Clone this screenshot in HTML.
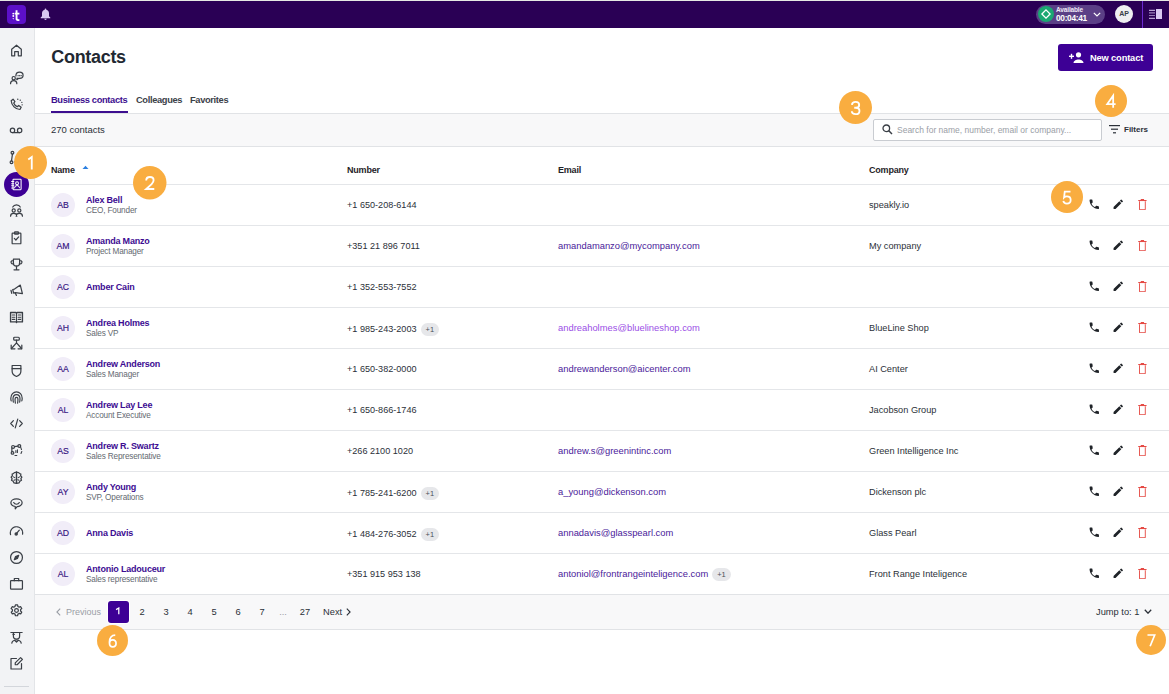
<!DOCTYPE html>
<html><head><meta charset="utf-8">
<style>
*{box-sizing:border-box;margin:0;padding:0}
html,body{width:1169px;height:694px;overflow:hidden;background:#fff;font-family:"Liberation Sans",sans-serif;color:#1f2328}
.abs{position:absolute}
#topbar{position:absolute;left:0;top:1px;width:1169px;height:27px;background:#2a0055}
#topline{position:absolute;left:0;top:0;width:1169px;height:1px;background:#e6e9e4}
#logo{position:absolute;left:7px;top:5px;width:19px;height:19px;border-radius:4px;background:#5c10c9;color:#fff;font-weight:bold;font-size:14px;line-height:19px;text-align:center}
#side{position:absolute;left:0;top:28px;width:35px;height:666px;background:#f2f3f5;border-right:1px solid #e3e5e8}
#main{position:absolute;left:35px;top:28px;width:1134px;height:666px;background:#fff}
h1{position:absolute;left:51.3px;top:47px;font-size:18px;font-weight:bold;color:#222831;letter-spacing:-0.32px}
.tab{position:absolute;top:95px;font-size:9.3px;font-weight:bold;color:#3c4149;letter-spacing:-0.34px}
#tabline{position:absolute;left:35px;top:113px;width:1134px;height:1px;background:#e1e3e6}
#band{position:absolute;left:35px;top:114px;width:1134px;height:33px;background:#f8f8f9;border-bottom:1px solid #e1e3e6}
.hdr{position:absolute;top:165px;font-size:9px;font-weight:bold;color:#1f2328;letter-spacing:-0.2px}
.row{position:absolute;left:35px;width:1134px;height:41px;border-top:1px solid #e4e6e9}
.row > div{position:absolute}
.av{left:16px;top:8px;width:24px;height:24px;border-radius:50%;background:#f1edf8;color:#34127f;font-size:8.7px;-webkit-text-stroke:0.15px #34127f;line-height:24px;text-align:center}
.nm{left:51px;font-size:9px;font-weight:bold;color:#3d0c92;white-space:nowrap;letter-spacing:-0.2px}
.sub{left:51px;top:21px;font-size:8.2px;color:#646971;white-space:nowrap;letter-spacing:-0.16px}
.num{left:312px;top:14.6px;font-size:9.1px;color:#2b3038;white-space:nowrap}
.em{left:523px;top:14px;font-size:9.4px;color:#4a1a9a;white-space:nowrap}
.em.light{color:#9b4fe6}
.co{left:834px;top:14.9px;font-size:9.2px;color:#2b3038;white-space:nowrap}
.plus{display:inline-block;margin-left:4px;height:13px;padding:0 5px;border-radius:6.5px;background:#e6e7ea;font-size:7.5px;line-height:13px;color:#4a4f57;vertical-align:0px}
.ic{position:absolute;top:14px}
#pag{position:absolute;left:35px;top:594px;width:1134px;height:36px;background:#f8f8f9;border-top:1px solid #e1e3e6;border-bottom:1px solid #e1e3e6}
.pg{position:absolute;top:607px;font-size:9.3px;color:#2b3038;text-align:center;width:20px}
.badge{position:absolute;width:32px;height:32px;border-radius:50%;background:#f9ad3f;color:#fff;font-size:18px;line-height:36px;text-align:center}
</style></head><body>
<div id="topline"></div>
<div id="topbar"></div>
<div id="logo"></div><svg class="abs" style="left:7px;top:5px" width="19" height="19" viewBox="0 0 19 19"><g fill="#fff"><circle cx="6.3" cy="8.6" r="0.95"/><circle cx="6.3" cy="11" r="0.95"/><path d="M5.4 13.2h1.8l-.9 1.3z"/><path d="M8.6 5.2h1.9v2.6h1.9v1.7h-1.9v4.1c0 .5.3.7.8.7h1.1v1.6h-1.6c-1.4 0-2.2-.7-2.2-2.1V9.5H7.7V7.8h.9z"/></g></svg>
<div id="side"></div>
<div id="main"></div>
<h1>Contacts</h1>
<div class="tab" style="left:51px;color:#3d0f8f">Business contacts</div>
<div class="abs" style="left:51px;top:111px;width:77px;height:2px;background:#3d0f8f"></div>
<div class="tab" style="left:136px">Colleagues</div>
<div class="tab" style="left:190px">Favorites</div>
<div id="tabline"></div>
<div id="band"></div>
<div class="abs" style="left:51px;top:123.8px;font-size:9.5px;color:#2b3038">270 contacts</div>
<div class="hdr" style="left:51px">Name</div>
<div class="hdr" style="left:347px">Number</div>
<div class="hdr" style="left:558px">Email</div>
<div class="hdr" style="left:869px">Company</div>
<div id="pag"></div>
<div class="row" style="top:184px"><div class="av">AB</div><div class="nm" style="top:10px">Alex Bell</div><div class="sub">CEO, Founder</div><div class="num">+1 650-208-6144</div><div class="co">speakly.io</div><svg class="ic" style="left:1053px;top:12.5px" width="12.5" height="12.5" viewBox="0 0 24 24"><path fill="#1f2328" d="M6.6 10.8c1.4 2.8 3.8 5.1 6.6 6.6l2.2-2.2c.3-.3.7-.4 1-.2 1.1.4 2.3.6 3.6.6.6 0 1 .4 1 1V20c0 .6-.4 1-1 1C10.6 21 3 13.4 3 4c0-.6.4-1 1-1h3.5c.6 0 1 .4 1 1 0 1.3.2 2.5.6 3.6.1.3 0 .7-.2 1L6.6 10.8z"/></svg><svg class="ic" style="left:1077px;top:12.5px" width="12.5" height="12.5" viewBox="0 0 24 24"><path fill="#1f2328" d="M3 17.25V21h3.75L17.81 9.94l-3.75-3.75L3 17.25zM20.71 7.04a1 1 0 0 0 0-1.41l-2.34-2.34a1 1 0 0 0-1.41 0l-1.83 1.83 3.75 3.75 1.83-1.83z"/></svg><svg class="ic" style="left:1103px;top:13.6px" width="8.8" height="11.4" viewBox="0 0 11 12" preserveAspectRatio="none"><g fill="none" stroke="#e54b45" stroke-width="1.15"><path d="M0.3 1.6h10.4"/><path d="M4 1.6V.6h3v1"/><path d="M1.9 2.3v8.2c0 .6.4 1 1 1h5.2c.6 0 1-.4 1-1V2.3"/></g></svg></div>
<div class="row" style="top:225px"><div class="av">AM</div><div class="nm" style="top:10px">Amanda Manzo</div><div class="sub">Project Manager</div><div class="num">+351 21 896 7011</div><div class="em">amandamanzo@mycompany.com</div><div class="co">My company</div><svg class="ic" style="left:1053px;top:12.5px" width="12.5" height="12.5" viewBox="0 0 24 24"><path fill="#1f2328" d="M6.6 10.8c1.4 2.8 3.8 5.1 6.6 6.6l2.2-2.2c.3-.3.7-.4 1-.2 1.1.4 2.3.6 3.6.6.6 0 1 .4 1 1V20c0 .6-.4 1-1 1C10.6 21 3 13.4 3 4c0-.6.4-1 1-1h3.5c.6 0 1 .4 1 1 0 1.3.2 2.5.6 3.6.1.3 0 .7-.2 1L6.6 10.8z"/></svg><svg class="ic" style="left:1077px;top:12.5px" width="12.5" height="12.5" viewBox="0 0 24 24"><path fill="#1f2328" d="M3 17.25V21h3.75L17.81 9.94l-3.75-3.75L3 17.25zM20.71 7.04a1 1 0 0 0 0-1.41l-2.34-2.34a1 1 0 0 0-1.41 0l-1.83 1.83 3.75 3.75 1.83-1.83z"/></svg><svg class="ic" style="left:1103px;top:13.6px" width="8.8" height="11.4" viewBox="0 0 11 12" preserveAspectRatio="none"><g fill="none" stroke="#e54b45" stroke-width="1.15"><path d="M0.3 1.6h10.4"/><path d="M4 1.6V.6h3v1"/><path d="M1.9 2.3v8.2c0 .6.4 1 1 1h5.2c.6 0 1-.4 1-1V2.3"/></g></svg></div>
<div class="row" style="top:266px"><div class="av">AC</div><div class="nm" style="top:15px">Amber Cain</div><div class="num">+1 352-553-7552</div><svg class="ic" style="left:1053px;top:12.5px" width="12.5" height="12.5" viewBox="0 0 24 24"><path fill="#1f2328" d="M6.6 10.8c1.4 2.8 3.8 5.1 6.6 6.6l2.2-2.2c.3-.3.7-.4 1-.2 1.1.4 2.3.6 3.6.6.6 0 1 .4 1 1V20c0 .6-.4 1-1 1C10.6 21 3 13.4 3 4c0-.6.4-1 1-1h3.5c.6 0 1 .4 1 1 0 1.3.2 2.5.6 3.6.1.3 0 .7-.2 1L6.6 10.8z"/></svg><svg class="ic" style="left:1077px;top:12.5px" width="12.5" height="12.5" viewBox="0 0 24 24"><path fill="#1f2328" d="M3 17.25V21h3.75L17.81 9.94l-3.75-3.75L3 17.25zM20.71 7.04a1 1 0 0 0 0-1.41l-2.34-2.34a1 1 0 0 0-1.41 0l-1.83 1.83 3.75 3.75 1.83-1.83z"/></svg><svg class="ic" style="left:1103px;top:13.6px" width="8.8" height="11.4" viewBox="0 0 11 12" preserveAspectRatio="none"><g fill="none" stroke="#e54b45" stroke-width="1.15"><path d="M0.3 1.6h10.4"/><path d="M4 1.6V.6h3v1"/><path d="M1.9 2.3v8.2c0 .6.4 1 1 1h5.2c.6 0 1-.4 1-1V2.3"/></g></svg></div>
<div class="row" style="top:307px"><div class="av">AH</div><div class="nm" style="top:10px">Andrea Holmes</div><div class="sub">Sales VP</div><div class="num">+1 985-243-2003<span class="plus">+1</span></div><div class="em light">andreaholmes@bluelineshop.com</div><div class="co">BlueLine Shop</div><svg class="ic" style="left:1053px;top:12.5px" width="12.5" height="12.5" viewBox="0 0 24 24"><path fill="#1f2328" d="M6.6 10.8c1.4 2.8 3.8 5.1 6.6 6.6l2.2-2.2c.3-.3.7-.4 1-.2 1.1.4 2.3.6 3.6.6.6 0 1 .4 1 1V20c0 .6-.4 1-1 1C10.6 21 3 13.4 3 4c0-.6.4-1 1-1h3.5c.6 0 1 .4 1 1 0 1.3.2 2.5.6 3.6.1.3 0 .7-.2 1L6.6 10.8z"/></svg><svg class="ic" style="left:1077px;top:12.5px" width="12.5" height="12.5" viewBox="0 0 24 24"><path fill="#1f2328" d="M3 17.25V21h3.75L17.81 9.94l-3.75-3.75L3 17.25zM20.71 7.04a1 1 0 0 0 0-1.41l-2.34-2.34a1 1 0 0 0-1.41 0l-1.83 1.83 3.75 3.75 1.83-1.83z"/></svg><svg class="ic" style="left:1103px;top:13.6px" width="8.8" height="11.4" viewBox="0 0 11 12" preserveAspectRatio="none"><g fill="none" stroke="#e54b45" stroke-width="1.15"><path d="M0.3 1.6h10.4"/><path d="M4 1.6V.6h3v1"/><path d="M1.9 2.3v8.2c0 .6.4 1 1 1h5.2c.6 0 1-.4 1-1V2.3"/></g></svg></div>
<div class="row" style="top:348px"><div class="av">AA</div><div class="nm" style="top:10px">Andrew Anderson</div><div class="sub">Sales Manager</div><div class="num">+1 650-382-0000</div><div class="em">andrewanderson@aicenter.com</div><div class="co">AI Center</div><svg class="ic" style="left:1053px;top:12.5px" width="12.5" height="12.5" viewBox="0 0 24 24"><path fill="#1f2328" d="M6.6 10.8c1.4 2.8 3.8 5.1 6.6 6.6l2.2-2.2c.3-.3.7-.4 1-.2 1.1.4 2.3.6 3.6.6.6 0 1 .4 1 1V20c0 .6-.4 1-1 1C10.6 21 3 13.4 3 4c0-.6.4-1 1-1h3.5c.6 0 1 .4 1 1 0 1.3.2 2.5.6 3.6.1.3 0 .7-.2 1L6.6 10.8z"/></svg><svg class="ic" style="left:1077px;top:12.5px" width="12.5" height="12.5" viewBox="0 0 24 24"><path fill="#1f2328" d="M3 17.25V21h3.75L17.81 9.94l-3.75-3.75L3 17.25zM20.71 7.04a1 1 0 0 0 0-1.41l-2.34-2.34a1 1 0 0 0-1.41 0l-1.83 1.83 3.75 3.75 1.83-1.83z"/></svg><svg class="ic" style="left:1103px;top:13.6px" width="8.8" height="11.4" viewBox="0 0 11 12" preserveAspectRatio="none"><g fill="none" stroke="#e54b45" stroke-width="1.15"><path d="M0.3 1.6h10.4"/><path d="M4 1.6V.6h3v1"/><path d="M1.9 2.3v8.2c0 .6.4 1 1 1h5.2c.6 0 1-.4 1-1V2.3"/></g></svg></div>
<div class="row" style="top:389px"><div class="av">AL</div><div class="nm" style="top:10px">Andrew Lay Lee</div><div class="sub">Account Executive</div><div class="num">+1 650-866-1746</div><div class="co">Jacobson Group</div><svg class="ic" style="left:1053px;top:12.5px" width="12.5" height="12.5" viewBox="0 0 24 24"><path fill="#1f2328" d="M6.6 10.8c1.4 2.8 3.8 5.1 6.6 6.6l2.2-2.2c.3-.3.7-.4 1-.2 1.1.4 2.3.6 3.6.6.6 0 1 .4 1 1V20c0 .6-.4 1-1 1C10.6 21 3 13.4 3 4c0-.6.4-1 1-1h3.5c.6 0 1 .4 1 1 0 1.3.2 2.5.6 3.6.1.3 0 .7-.2 1L6.6 10.8z"/></svg><svg class="ic" style="left:1077px;top:12.5px" width="12.5" height="12.5" viewBox="0 0 24 24"><path fill="#1f2328" d="M3 17.25V21h3.75L17.81 9.94l-3.75-3.75L3 17.25zM20.71 7.04a1 1 0 0 0 0-1.41l-2.34-2.34a1 1 0 0 0-1.41 0l-1.83 1.83 3.75 3.75 1.83-1.83z"/></svg><svg class="ic" style="left:1103px;top:13.6px" width="8.8" height="11.4" viewBox="0 0 11 12" preserveAspectRatio="none"><g fill="none" stroke="#e54b45" stroke-width="1.15"><path d="M0.3 1.6h10.4"/><path d="M4 1.6V.6h3v1"/><path d="M1.9 2.3v8.2c0 .6.4 1 1 1h5.2c.6 0 1-.4 1-1V2.3"/></g></svg></div>
<div class="row" style="top:430px"><div class="av">AS</div><div class="nm" style="top:10px">Andrew R. Swartz</div><div class="sub">Sales Representative</div><div class="num">+266 2100 1020</div><div class="em">andrew.s@greenintinc.com</div><div class="co">Green Intelligence Inc</div><svg class="ic" style="left:1053px;top:12.5px" width="12.5" height="12.5" viewBox="0 0 24 24"><path fill="#1f2328" d="M6.6 10.8c1.4 2.8 3.8 5.1 6.6 6.6l2.2-2.2c.3-.3.7-.4 1-.2 1.1.4 2.3.6 3.6.6.6 0 1 .4 1 1V20c0 .6-.4 1-1 1C10.6 21 3 13.4 3 4c0-.6.4-1 1-1h3.5c.6 0 1 .4 1 1 0 1.3.2 2.5.6 3.6.1.3 0 .7-.2 1L6.6 10.8z"/></svg><svg class="ic" style="left:1077px;top:12.5px" width="12.5" height="12.5" viewBox="0 0 24 24"><path fill="#1f2328" d="M3 17.25V21h3.75L17.81 9.94l-3.75-3.75L3 17.25zM20.71 7.04a1 1 0 0 0 0-1.41l-2.34-2.34a1 1 0 0 0-1.41 0l-1.83 1.83 3.75 3.75 1.83-1.83z"/></svg><svg class="ic" style="left:1103px;top:13.6px" width="8.8" height="11.4" viewBox="0 0 11 12" preserveAspectRatio="none"><g fill="none" stroke="#e54b45" stroke-width="1.15"><path d="M0.3 1.6h10.4"/><path d="M4 1.6V.6h3v1"/><path d="M1.9 2.3v8.2c0 .6.4 1 1 1h5.2c.6 0 1-.4 1-1V2.3"/></g></svg></div>
<div class="row" style="top:471px"><div class="av">AY</div><div class="nm" style="top:10px">Andy Young</div><div class="sub">SVP, Operations</div><div class="num">+1 785-241-6200<span class="plus">+1</span></div><div class="em">a_young@dickenson.com</div><div class="co">Dickenson plc</div><svg class="ic" style="left:1053px;top:12.5px" width="12.5" height="12.5" viewBox="0 0 24 24"><path fill="#1f2328" d="M6.6 10.8c1.4 2.8 3.8 5.1 6.6 6.6l2.2-2.2c.3-.3.7-.4 1-.2 1.1.4 2.3.6 3.6.6.6 0 1 .4 1 1V20c0 .6-.4 1-1 1C10.6 21 3 13.4 3 4c0-.6.4-1 1-1h3.5c.6 0 1 .4 1 1 0 1.3.2 2.5.6 3.6.1.3 0 .7-.2 1L6.6 10.8z"/></svg><svg class="ic" style="left:1077px;top:12.5px" width="12.5" height="12.5" viewBox="0 0 24 24"><path fill="#1f2328" d="M3 17.25V21h3.75L17.81 9.94l-3.75-3.75L3 17.25zM20.71 7.04a1 1 0 0 0 0-1.41l-2.34-2.34a1 1 0 0 0-1.41 0l-1.83 1.83 3.75 3.75 1.83-1.83z"/></svg><svg class="ic" style="left:1103px;top:13.6px" width="8.8" height="11.4" viewBox="0 0 11 12" preserveAspectRatio="none"><g fill="none" stroke="#e54b45" stroke-width="1.15"><path d="M0.3 1.6h10.4"/><path d="M4 1.6V.6h3v1"/><path d="M1.9 2.3v8.2c0 .6.4 1 1 1h5.2c.6 0 1-.4 1-1V2.3"/></g></svg></div>
<div class="row" style="top:512px"><div class="av">AD</div><div class="nm" style="top:15px">Anna Davis</div><div class="num">+1 484-276-3052<span class="plus">+1</span></div><div class="em">annadavis@glasspearl.com</div><div class="co">Glass Pearl</div><svg class="ic" style="left:1053px;top:12.5px" width="12.5" height="12.5" viewBox="0 0 24 24"><path fill="#1f2328" d="M6.6 10.8c1.4 2.8 3.8 5.1 6.6 6.6l2.2-2.2c.3-.3.7-.4 1-.2 1.1.4 2.3.6 3.6.6.6 0 1 .4 1 1V20c0 .6-.4 1-1 1C10.6 21 3 13.4 3 4c0-.6.4-1 1-1h3.5c.6 0 1 .4 1 1 0 1.3.2 2.5.6 3.6.1.3 0 .7-.2 1L6.6 10.8z"/></svg><svg class="ic" style="left:1077px;top:12.5px" width="12.5" height="12.5" viewBox="0 0 24 24"><path fill="#1f2328" d="M3 17.25V21h3.75L17.81 9.94l-3.75-3.75L3 17.25zM20.71 7.04a1 1 0 0 0 0-1.41l-2.34-2.34a1 1 0 0 0-1.41 0l-1.83 1.83 3.75 3.75 1.83-1.83z"/></svg><svg class="ic" style="left:1103px;top:13.6px" width="8.8" height="11.4" viewBox="0 0 11 12" preserveAspectRatio="none"><g fill="none" stroke="#e54b45" stroke-width="1.15"><path d="M0.3 1.6h10.4"/><path d="M4 1.6V.6h3v1"/><path d="M1.9 2.3v8.2c0 .6.4 1 1 1h5.2c.6 0 1-.4 1-1V2.3"/></g></svg></div>
<div class="row" style="top:553px"><div class="av">AL</div><div class="nm" style="top:10px">Antonio Ladouceur</div><div class="sub">Sales representative</div><div class="num">+351 915 953 138</div><div class="em">antoniol@frontrangeinteligence.com<span class="plus">+1</span></div><div class="co">Front Range Inteligence</div><svg class="ic" style="left:1053px;top:12.5px" width="12.5" height="12.5" viewBox="0 0 24 24"><path fill="#1f2328" d="M6.6 10.8c1.4 2.8 3.8 5.1 6.6 6.6l2.2-2.2c.3-.3.7-.4 1-.2 1.1.4 2.3.6 3.6.6.6 0 1 .4 1 1V20c0 .6-.4 1-1 1C10.6 21 3 13.4 3 4c0-.6.4-1 1-1h3.5c.6 0 1 .4 1 1 0 1.3.2 2.5.6 3.6.1.3 0 .7-.2 1L6.6 10.8z"/></svg><svg class="ic" style="left:1077px;top:12.5px" width="12.5" height="12.5" viewBox="0 0 24 24"><path fill="#1f2328" d="M3 17.25V21h3.75L17.81 9.94l-3.75-3.75L3 17.25zM20.71 7.04a1 1 0 0 0 0-1.41l-2.34-2.34a1 1 0 0 0-1.41 0l-1.83 1.83 3.75 3.75 1.83-1.83z"/></svg><svg class="ic" style="left:1103px;top:13.6px" width="8.8" height="11.4" viewBox="0 0 11 12" preserveAspectRatio="none"><g fill="none" stroke="#e54b45" stroke-width="1.15"><path d="M0.3 1.6h10.4"/><path d="M4 1.6V.6h3v1"/><path d="M1.9 2.3v8.2c0 .6.4 1 1 1h5.2c.6 0 1-.4 1-1V2.3"/></g></svg></div>
<!-- bell -->
<svg class="abs" style="left:40px;top:8px" width="11" height="12" viewBox="0 0 11 12"><path fill="#d9c9f2" d="M5.5 0.5c.5 0 .8.3.8.8v.5C8 2.2 9 3.6 9 5.3V8.3l1.3 1.3v.6H.7v-.6L2 8.3V5.3C2 3.6 3 2.2 4.7 1.8v-.5c0-.5.3-.8.8-.8zM4.3 10.8h2.4c0 .7-.5 1.1-1.2 1.1s-1.2-.4-1.2-1.1z"/></svg>
<!-- status pill -->
<div class="abs" style="left:1036px;top:5px;width:69px;height:19px;border-radius:10px;background:#5b3f86"></div>
<div class="abs" style="left:1038px;top:6px;width:16px;height:16px;border-radius:50%;background:#1aa872"></div>
<svg class="abs" style="left:1040px;top:8px" width="12" height="12" viewBox="0 0 12 12"><path fill="none" stroke="#fff" stroke-width="1.3" d="M6 1.9L10.1 6 6 10.1 1.9 6z"/></svg>
<div class="abs" style="left:1056px;top:6px;font-size:6.5px;font-weight:bold;color:#efe9f8;line-height:7px;letter-spacing:-0.15px">Available</div>
<div class="abs" style="left:1056px;top:14px;font-size:8.3px;font-weight:bold;color:#fff;line-height:9px;letter-spacing:-0.3px">00:04:41</div>
<svg class="abs" style="left:1093px;top:12px" width="8" height="5" viewBox="0 0 8 5"><path fill="none" stroke="#fff" stroke-width="1.2" d="M.8 .8L4 4 7.2.8"/></svg>
<div class="abs" style="left:1115px;top:5px;width:18px;height:18px;border-radius:50%;background:#efeff1;color:#3a3f46;font-size:7px;font-weight:bold;line-height:18px;text-align:center">AP</div>
<div class="abs" style="left:1142px;top:1px;width:1px;height:27px;background:#6a2ad0"></div>
<svg class="abs" style="left:1149px;top:9px" width="14" height="11" viewBox="0 0 14 11"><g fill="#d9c9f2"><rect x="0" y="0.8" width="6" height="1"/><rect x="0" y="3.4" width="6" height="1" opacity=".8"/><rect x="0" y="6" width="6" height="1" opacity=".6"/><rect x="0" y="8.8" width="6" height="1"/><rect x="7" y="0" width="6" height="10"/></g></svg>
<!-- new contact button -->
<div class="abs" style="left:1058px;top:44px;width:95px;height:27px;border-radius:3px;background:#3d0095"></div>
<svg class="abs" style="left:1069px;top:52px" width="16" height="11" viewBox="0 0 16 11"><g fill="#fff"><rect x="0" y="3.6" width="5" height="1.4"/><rect x="1.8" y="1.8" width="1.4" height="5"/><circle cx="9.5" cy="2.8" r="2.6"/><path d="M4.5 11c0-2.3 2.5-3.6 5-3.6s5 1.3 5 3.6z"/></g></svg>
<div class="abs" style="left:1090px;top:53px;font-size:9.3px;font-weight:bold;color:#fff;letter-spacing:-0.15px">New contact</div>
<!-- search -->
<div class="abs" style="left:873px;top:119px;width:229px;height:22px;border:1px solid #c9ccd1;border-radius:2px;background:#fff"></div>
<svg class="abs" style="left:882px;top:124px" width="11" height="11" viewBox="0 0 11 11"><circle cx="4.3" cy="4.3" r="3.3" fill="none" stroke="#3a3f46" stroke-width="1.3"/><path d="M6.8 6.8L10 10" stroke="#3a3f46" stroke-width="1.5"/></svg>
<div class="abs" style="left:897px;top:125px;font-size:8.5px;color:#9a9ea6;white-space:nowrap">Search for name, number, email or company...</div>
<svg class="abs" style="left:1109px;top:125px" width="11" height="9" viewBox="0 0 11 9"><g fill="#2b3038"><rect x="0" y="0" width="11" height="1.2"/><rect x="2" y="3.6" width="7" height="1.2"/><rect x="4" y="7.2" width="3" height="1.2"/></g></svg>
<div class="abs" style="left:1124px;top:125px;font-size:8px;font-weight:bold;color:#2b3038">Filters</div>
<!-- sort arrow -->
<svg class="abs" style="left:82px;top:165px" width="7" height="5" viewBox="0 0 7 5"><path fill="#2a7fe0" d="M3.5 .8L6.5 4H.5z"/></svg>
<!-- pagination -->
<svg class="abs" style="left:56px;top:608px" width="5" height="8" viewBox="0 0 5 8"><path fill="none" stroke="#9a9ea6" stroke-width="1.1" d="M4.2.6L.9 4l3.3 3.4"/></svg>
<div class="abs" style="left:66px;top:607px;font-size:9px;color:#9a9ea6">Previous</div>
<div class="abs" style="left:108px;top:601px;width:21px;height:22px;border-radius:3px;background:#3d0095;box-shadow:0 0 0 1px #fff"></div><svg class="abs" style="left:115px;top:607px" width="6" height="8" viewBox="0 0 6 8"><path d="M1.1 2.6L3.8 1V7.2" fill="none" stroke="#fff" stroke-width="1.25"/></svg>
<div class="pg" style="left:132px">2</div>
<div class="pg" style="left:156px">3</div>
<div class="pg" style="left:180px">4</div>
<div class="pg" style="left:204px">5</div>
<div class="pg" style="left:228px">6</div>
<div class="pg" style="left:252px">7</div>
<div class="pg" style="left:273px;color:#9a9ea6">...</div>
<div class="pg" style="left:295px">27</div>
<div class="abs" style="left:323px;top:607px;font-size:9.3px;color:#2b3038">Next</div>
<svg class="abs" style="left:346px;top:608px" width="5" height="8" viewBox="0 0 5 8"><path fill="none" stroke="#2b3038" stroke-width="1.1" d="M.8.6L4.1 4 .8 7.4"/></svg>
<div class="abs" style="left:1096px;top:607px;font-size:9.3px;color:#2b3038">Jump to: 1</div>
<svg class="abs" style="left:1144px;top:609px" width="8" height="5" viewBox="0 0 8 5"><path fill="none" stroke="#2b3038" stroke-width="1.3" d="M.8.8L4 4.2 7.2.8"/></svg>
<svg class="abs" style="left:9.2px;top:43.3px" width="15" height="15" viewBox="0 0 24 24" fill="none" stroke="#3a3f46" stroke-width="1.95" stroke-linecap="round" stroke-linejoin="round"><path d="M4.3 20.5V10L12 3.5l7.7 6.5v10.5h-4.8v-6.8H9.1v6.8z"/></svg>
<svg class="abs" style="left:9.2px;top:69.95px" width="15" height="15" viewBox="0 0 24 24" fill="none" stroke="#3a3f46" stroke-width="1.95" stroke-linecap="round" stroke-linejoin="round"><circle cx="7.5" cy="13" r="2.6"/><path d="M2.5 22c0-3 2.2-5 5-5s5 2 5 5"/><path d="M11 9.5C11 6 13.5 3.5 17 3.5s5.5 2.2 5.5 5-2.3 5-5.5 5h-2l-2.5 2 .5-2.7"/><path d="M14.5 9h.1M17 9h.1M19.5 9h.1" stroke-width="2"/></svg>
<svg class="abs" style="left:9.2px;top:96.6px" width="15" height="15" viewBox="0 0 24 24" fill="none" stroke="#3a3f46" stroke-width="1.95" stroke-linecap="round" stroke-linejoin="round"><path d="M6.5 3.5l3 4-2 2.2c1 2.6 3.3 4.9 5.8 5.8l2.2-2 4 3-2 3.5C10.5 20 4 13.5 3.5 6z"/><path d="M14 3.5h.1M18 5h.1M20.5 8.5h.1M21 12.5h.1" stroke-width="2.2"/></svg>
<svg class="abs" style="left:9.2px;top:123.25px" width="15" height="15" viewBox="0 0 24 24" fill="none" stroke="#3a3f46" stroke-width="1.95" stroke-linecap="round" stroke-linejoin="round"><circle cx="5.6" cy="11.8" r="3.5"/><circle cx="17" cy="11.8" r="3.5"/><path d="M5.6 15.3H17"/></svg>
<svg class="abs" style="left:9.2px;top:149.9px" width="15" height="15" viewBox="0 0 24 24" fill="none" stroke="#3a3f46" stroke-width="1.95" stroke-linecap="round" stroke-linejoin="round"><circle cx="5.5" cy="4.5" r="2.2"/><path d="M5.5 6.7L4 17.3"/><circle cx="4" cy="19.5" r="2.2"/><path d="M9 19c6 0 8-3 8-9"/></svg>
<svg class="abs" style="left:9.2px;top:203.2px" width="15" height="15" viewBox="0 0 24 24" fill="none" stroke="#3a3f46" stroke-width="1.95" stroke-linecap="round" stroke-linejoin="round"><circle cx="7.5" cy="12" r="2.5"/><circle cx="16.5" cy="12" r="2.5"/><path d="M2.5 21c0-2.8 2-4.5 5-4.5s5 1.7 5 4.5M11.5 21c0-2.8 2-4.5 5-4.5s5 1.7 5 4.5"/><path d="M6 6.5C7 4.5 9.5 3 12 3s5 1.5 6 3.5"/></svg>
<svg class="abs" style="left:9.2px;top:229.85px" width="15" height="15" viewBox="0 0 24 24" fill="none" stroke="#3a3f46" stroke-width="1.95" stroke-linecap="round" stroke-linejoin="round"><rect x="5" y="5" width="14" height="17" rx="1"/><rect x="9" y="3" width="6" height="3.5" rx=".5"/><path d="M8.5 13.5l2.5 2.5 4.5-5"/></svg>
<svg class="abs" style="left:9.2px;top:256.5px" width="15" height="15" viewBox="0 0 24 24" fill="none" stroke="#3a3f46" stroke-width="1.95" stroke-linecap="round" stroke-linejoin="round"><path d="M7 3.5h10v6a5 5 0 0 1-10 0z"/><path d="M7 6H4.5a2.5 2.5 0 0 0 2.8 4.5M17 6h2.5a2.5 2.5 0 0 1-2.8 4.5"/><path d="M12 14.5V19M8 20.5h8"/></svg>
<svg class="abs" style="left:9.2px;top:283.15px" width="15" height="15" viewBox="0 0 24 24" fill="none" stroke="#3a3f46" stroke-width="1.95" stroke-linecap="round" stroke-linejoin="round"><g transform="rotate(-14 12 12)"><path d="M3.5 9.5v5"/><path d="M6.5 9h3L20 5v14L9.5 15h-3z"/><path d="M9 15.5l1 4"/></g></svg>
<svg class="abs" style="left:9.2px;top:309.8px" width="15" height="15" viewBox="0 0 24 24" fill="none" stroke="#3a3f46" stroke-width="1.95" stroke-linecap="round" stroke-linejoin="round"><path d="M2.5 4h8.5l1 1 1-1h8.5v15h-8.5l-1 1-1-1H2.5z" stroke-width="2.2"/><path d="M12 5v14" stroke-width="1.8"/><path d="M5.3 8h4M5.3 11.5h4M5.3 15h4M14.7 8h4M14.7 11.5h4M14.7 15h4" stroke-width="1.8"/></svg>
<svg class="abs" style="left:9.2px;top:336.45px" width="15" height="15" viewBox="0 0 24 24" fill="none" stroke="#3a3f46" stroke-width="1.95" stroke-linecap="round" stroke-linejoin="round"><rect x="7.5" y="2" width="9" height="4.5" rx="1.5"/><path d="M12 6.5v4.5L4 20M12 11l8 9"/><path d="M3.5 14.5v6h6M20.5 14.5v6h-6"/></svg>
<svg class="abs" style="left:9.2px;top:363.1px" width="15" height="15" viewBox="0 0 24 24" fill="none" stroke="#3a3f46" stroke-width="1.95" stroke-linecap="round" stroke-linejoin="round"><path d="M5 4h14v9c0 4.5-3.5 7-7 8.5C8.5 20 5 17.5 5 13z"/><path d="M5 9h14"/></svg>
<svg class="abs" style="left:9.2px;top:389.75px" width="15" height="15" viewBox="0 0 24 24" fill="none" stroke="#3a3f46" stroke-width="1.95" stroke-linecap="round" stroke-linejoin="round"><path d="M3.5 17.5c-.4-1.3-.6-2.7-.6-4.3C2.9 7.5 7 3 12 3s9.1 4.5 9.1 10.2c0 1.6-.2 3-.6 4.3" stroke-width="1.9"/><path d="M7 19.5c-.4-1.5-.6-3-.6-5.5C6.4 10 9 7.3 12 7.3s5.6 2.7 5.6 6.7c0 2.5-.2 4-.6 5.5" stroke-width="1.9"/><path d="M10.2 21c-.3-1.5-.5-3.5-.5-6.5 0-1.5 1-2.8 2.3-2.8s2.3 1.3 2.3 2.8c0 3-.2 5-.5 6.5" stroke-width="1.9"/></svg>
<svg class="abs" style="left:9.2px;top:416.4px" width="15" height="15" viewBox="0 0 24 24" fill="none" stroke="#3a3f46" stroke-width="1.95" stroke-linecap="round" stroke-linejoin="round"><path d="M7 7.5L2.8 12 7 16.5M17 7.5l4.2 4.5-4.2 4.5M14 5l-4 14"/></svg>
<svg class="abs" style="left:9.2px;top:443.05px" width="15" height="15" viewBox="0 0 24 24" fill="none" stroke="#3a3f46" stroke-width="1.95" stroke-linecap="round" stroke-linejoin="round"><circle cx="6.5" cy="6.3" r="2.3"/><circle cx="16.5" cy="4.8" r="2.3"/><path d="M8.8 5.8l5.4-.8M4.6 8v5.5"/><circle cx="5.6" cy="15.8" r="2.1"/><path d="M9.5 20h3M18.8 7l1.2 3.5M20.5 13.5l-1.3 3.2M11 12v3.2M13.5 10.8v4.5" stroke-width="1.7"/></svg>
<svg class="abs" style="left:9.2px;top:469.7px" width="15" height="15" viewBox="0 0 24 24" fill="none" stroke="#3a3f46" stroke-width="1.95" stroke-linecap="round" stroke-linejoin="round"><path d="M12 3.5v17" stroke-width="2.3"/><path d="M12 3.5c-2.3 0-3.8.6-4.8 2L5 6.6l.4 2.6-2 2.2 1.6 2.5-1 2.6 2.6 1.5 1.4 2.6 4 .9"/><path d="M12 3.5c2.3 0 3.8.6 4.8 2L19 6.6l-.4 2.6 2 2.2-1.6 2.5 1 2.6-2.6 1.5-1.4 2.6-4 .9"/><path d="M7 11l2.2 1.2M17 11l-2.2 1.2M8 16.5l2-1M16 16.5l-2-1" stroke-width="1.7"/></svg>
<svg class="abs" style="left:9.2px;top:496.35px" width="15" height="15" viewBox="0 0 24 24" fill="none" stroke="#3a3f46" stroke-width="1.95" stroke-linecap="round" stroke-linejoin="round"><path d="M12 4.5c5 0 9 2.6 9 6.2s-4 6.3-8 6.3l-3 3.5v-3.7C6 16 3 13.6 3 10.7 3 7.1 7 4.5 12 4.5z"/><path d="M7.5 10.5c1 1.8 2.5 2.7 4.5 2.7s3.5-.9 4.5-2.7"/></svg>
<svg class="abs" style="left:9.2px;top:523.0px" width="15" height="15" viewBox="0 0 24 24" fill="none" stroke="#3a3f46" stroke-width="1.95" stroke-linecap="round" stroke-linejoin="round"><path d="M2.5 18.5A9.8 9.8 0 0 1 12 6a9.8 9.8 0 0 1 9.5 12.5" stroke-dasharray="4 1.2"/><path d="M11.5 17.5l5-6"/><circle cx="11.5" cy="17.5" r="1.8" fill="#3a3f46"/></svg>
<svg class="abs" style="left:9.2px;top:549.65px" width="15" height="15" viewBox="0 0 24 24" fill="none" stroke="#3a3f46" stroke-width="1.95" stroke-linecap="round" stroke-linejoin="round"><circle cx="12" cy="12" r="9.5"/><path d="M15.5 8.5l-2 5-5 2 2-5z" fill="#3a3f46"/></svg>
<svg class="abs" style="left:9.2px;top:576.3px" width="15" height="15" viewBox="0 0 24 24" fill="none" stroke="#3a3f46" stroke-width="1.95" stroke-linecap="round" stroke-linejoin="round"><rect x="2.5" y="7.5" width="19" height="13.5" rx="1"/><path d="M8.5 7.5V4h7v3.5"/></svg>
<svg class="abs" style="left:9.2px;top:602.95px" width="15" height="15" viewBox="0 0 24 24" fill="none" stroke="#3a3f46" stroke-width="1.95" stroke-linecap="round" stroke-linejoin="round"><circle cx="12" cy="12" r="3"/><path d="M10.3 3h3.4l.6 2.6 1.9 1.1 2.5-.8 1.7 2.9-1.9 1.8v2.2l1.9 1.8-1.7 2.9-2.5-.8-1.9 1.1-.6 2.6h-3.4l-.6-2.6-1.9-1.1-2.5.8-1.7-2.9 1.9-1.8v-2.2L3.4 8.8l1.7-2.9 2.5.8 1.9-1.1z"/></svg>
<svg class="abs" style="left:9.2px;top:629.6px" width="15" height="15" viewBox="0 0 24 24" fill="none" stroke="#3a3f46" stroke-width="1.95" stroke-linecap="round" stroke-linejoin="round"><path d="M3 4h18M7 4v5.5a5 5 0 0 0 10 0V4"/><path d="M6.5 7h2"/><path d="M4.5 21c.5-3 3-5 7.5-5s7 2 7.5 5"/><path d="M9 16.5l3 3 3-3"/></svg>
<svg class="abs" style="left:9.2px;top:656.25px" width="15" height="15" viewBox="0 0 24 24" fill="none" stroke="#3a3f46" stroke-width="1.95" stroke-linecap="round" stroke-linejoin="round"><path d="M12 4H3.2v16.8H20V12"/><path d="M18.5 2.5l3 3-8.5 8.5H10v-3z"/></svg>
<div class="abs" style="left:4px;top:172px;width:25px;height:25px;border-radius:50%;background:#3d0095"></div>
<svg class="abs" style="left:10px;top:178px" width="13" height="13" viewBox="0 0 24 24" fill="none" stroke="#fff" stroke-width="1.9" stroke-linecap="round" stroke-linejoin="round"><rect x="5.5" y="2.5" width="15" height="19" rx="1"/><path d="M3 6.5h4M3 10.5h4M3 14.5h4M3 18.5h4"/><circle cx="13" cy="9.5" r="2.6"/><path d="M8.5 18c.5-2.5 2-4 4.5-4s4 1.5 4.5 4"/></svg>
<div class="abs" style="left:4px;top:686px;width:25px;height:1px;background:#d3d6db"></div>

<svg class="abs" style="left:13.5px;top:145.5px" width="33" height="33" viewBox="0 0 34 34"><circle cx="17" cy="17" r="17" fill="#f9ad40"/><path transform="translate(12.1 10.2)" d="M2.6 3.6L6.2 1.1V13.9" fill="none" stroke="#fff" stroke-width="1.9"/></svg>
<svg class="abs" style="left:133.2px;top:166.1px" width="33.5" height="33.5" viewBox="0 0 34 34"><circle cx="17" cy="17" r="17" fill="#f9ad40"/><path transform="translate(12.1 10.2)" d="M1.3 4.6C1.3 2.4 2.9 1 5.1 1s3.7 1.4 3.7 3.3c0 1.5-.8 2.6-2 3.9L1.3 13.1h8.2" fill="none" stroke="#fff" stroke-width="1.9"/></svg>
<svg class="abs" style="left:839.0px;top:90.8px" width="33" height="33" viewBox="0 0 34 34"><circle cx="17" cy="17" r="17" fill="#f9ad40"/><path transform="translate(12.1 10.2)" d="M1.2 4C1.4 2.2 3 1 5 1c2.2 0 3.7 1.2 3.7 3.1 0 1.9-1.6 3-3.7 3H3.6h1.5c2.4 0 3.9 1.2 3.9 3.2 0 2.1-1.7 3.4-4 3.4-2.1 0-3.8-1.1-3.9-3" fill="none" stroke="#fff" stroke-width="1.9"/></svg>
<svg class="abs" style="left:1095.0px;top:85.0px" width="32" height="32" viewBox="0 0 34 34"><circle cx="17" cy="17" r="17" fill="#f9ad40"/><path transform="translate(12.1 10.2)" d="M7.2 13.9V1.1L.9 10.1h8.9" fill="none" stroke="#fff" stroke-width="1.9"/></svg>
<svg class="abs" style="left:1051.0px;top:181.0px" width="32" height="32" viewBox="0 0 34 34"><circle cx="17" cy="17" r="17" fill="#f9ad40"/><path transform="translate(12.1 10.2)" d="M8.6 1.1H2.5L1.8 7.3C2.5 6.6 3.5 6.2 4.8 6.2c2.4 0 4 1.6 4 3.8 0 2.3-1.6 3.8-4 3.8-2 0-3.5-1-3.8-2.8" fill="none" stroke="#fff" stroke-width="1.9"/></svg>
<svg class="abs" style="left:96.9px;top:625.1px" width="31" height="31" viewBox="0 0 34 34"><circle cx="17" cy="17" r="17" fill="#f9ad40"/><path transform="translate(12.1 10.2)" d="M7.9 1C3.9 1 1.6 3.8 1.6 8.3v1.3c0 2.5 1.5 4.2 3.6 4.2 2.2 0 3.6-1.7 3.6-3.9S7.4 6.1 5.2 6.1C3.2 6.1 1.6 7.6 1.6 9.6" fill="none" stroke="#fff" stroke-width="1.9"/></svg>
<svg class="abs" style="left:1136.0px;top:625.0px" width="30" height="30" viewBox="0 0 34 34"><circle cx="17" cy="17" r="17" fill="#f9ad40"/><path transform="translate(12.1 10.2)" d="M.9 1.1h8.2L3.9 13.9" fill="none" stroke="#fff" stroke-width="1.9"/></svg>
</body></html>
